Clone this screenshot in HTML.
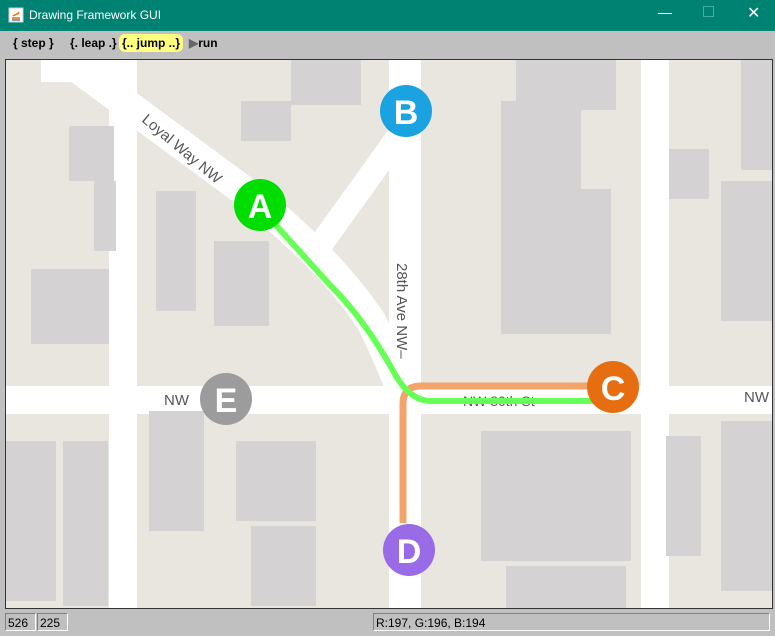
<!DOCTYPE html>
<html><head><style>
body{margin:0;width:775px;height:636px;background:#c0c0c0;font-family:"Liberation Sans",sans-serif;position:relative;overflow:hidden}
.title{position:absolute;left:0;top:0;width:775px;height:31px;background:#008272;color:#fff;font-size:12px}
.title span{position:absolute;left:29px;top:8px}
.menu{position:absolute;top:36px;font-size:12px;color:#000;font-weight:bold}
.st{position:absolute;top:613px;height:18px;border:1px solid #fff;border-top-color:#808080;border-left-color:#808080;font-size:12px;line-height:18px;padding-left:2px;box-sizing:border-box;background:#c0c0c0}
</style></head><body>
<div class="title">
<svg style="position:absolute;left:8px;top:7px" width="16" height="16"><rect x="1" y="1" width="14" height="14" fill="#fff" stroke="#ccc"/><path d="M4 11h8M5 9c2-2 5-1 6-4" stroke="#e76f00" stroke-width="1.5" fill="none"/><path d="M4 13h8" stroke="#5382a1" stroke-width="1.5"/></svg>
<span>Drawing Framework GUI</span>
<span style="left:658px;top:4px;font-size:14px">—</span>
<span style="left:703px;top:6px;width:9px;height:9px;border:1px solid #4aa;"></span>
<span style="left:747px;top:3px;font-size:16px">✕</span>
</div>
<div class="menu" style="left:13px">{ step }</div>
<div class="menu" style="left:70px">{. leap .}</div>
<div class="menu" style="left:119px;top:34px;background:#ffff80;border-radius:6px;padding:2px 3px">{.. jump ..}</div>
<div class="menu" style="left:189px"><span style="color:#666">▶</span>run</div>
<svg style="position:absolute;left:5px;top:59px;border:1px solid #333" width="766" height="548" viewBox="5 59 766 548">
<rect x="5" y="59" width="766" height="548" fill="#e9e6df"/>
<g fill="#fff">
<rect x="108" y="59" width="28" height="548"/>
<rect x="388" y="59" width="32" height="548"/>
<rect x="640" y="59" width="28" height="548"/>
<rect x="5" y="385" width="766" height="28"/>
<rect x="40" y="59" width="68" height="22"/>
</g>
<path d="M40 40L250 195Q330 260 370 320Q390 360 402 395" stroke="#fff" stroke-width="30" fill="none"/>
<path d="M405 125L315 250" stroke="#fff" stroke-width="24" fill="none"/>
<g fill="#d4d2d2">
<rect x="30" y="268" width="78" height="75"/><rect x="93" y="180" width="22" height="70"/><rect x="68" y="125" width="45" height="55"/>
<rect x="155" y="190" width="40" height="120"/><rect x="213" y="240" width="55" height="85"/>
<rect x="290" y="59" width="70" height="45"/><rect x="240" y="100" width="50" height="40"/>
<rect x="500" y="188" width="110" height="145"/><rect x="500" y="100" width="80" height="90"/><rect x="515" y="59" width="100" height="50"/>
<rect x="668" y="148" width="40" height="50"/><rect x="720" y="180" width="51" height="140"/><rect x="740" y="59" width="31" height="110"/>
<rect x="5" y="440" width="50" height="160"/><rect x="62" y="440" width="45" height="165"/><rect x="148" y="410" width="55" height="120"/>
<rect x="235" y="440" width="80" height="80"/><rect x="250" y="525" width="65" height="80"/>
<rect x="480" y="430" width="150" height="130"/><rect x="505" y="565" width="120" height="42"/>
<rect x="665" y="435" width="35" height="120"/><rect x="720" y="420" width="51" height="170"/>
</g>
<g font-size="15" fill="#555">
<text x="140" y="120" transform="rotate(40 140 120)">Loyal Way NW</text>
<text x="396" y="262" transform="rotate(90 396 262)">28th Ave NW–</text>
<text x="163" y="404">NW</text>
<text x="462" y="405" font-size="14">NW 80th St</text>
<text x="743" y="401">NW</text>
</g>
<path d="M593 385H420Q402 385 402 403V522" stroke="#f2a46a" stroke-width="7" fill="none"/>
<path d="M262 210L330 285Q365 320 395 375Q410 400 430 400H595" stroke="#66ff55" stroke-width="6" fill="none"/>
<g fill="#fff">
<circle cx="259" cy="204" r="26" fill="#00dd00"/>
<circle cx="405" cy="110" r="26" fill="#1aa3e0"/>
<circle cx="612" cy="386" r="26" fill="#e66e10"/>
<circle cx="408" cy="549" r="26" fill="#9a6be6"/>
<circle cx="225" cy="398" r="26" fill="#9c9c9c"/>
<g font-size="34" font-weight="bold" text-anchor="middle">
<text x="259" y="217">A</text><text x="405" y="123">B</text><text x="612" y="399">C</text><text x="408" y="562">D</text><text x="225" y="411">E</text>
</g></g>
</svg>
<div class="st" style="left:5px;width:31px">526</div>
<div class="st" style="left:37px;width:31px">225</div>
<div class="st" style="left:373px;width:397px">R:197, G:196, B:194</div>
</body></html>
